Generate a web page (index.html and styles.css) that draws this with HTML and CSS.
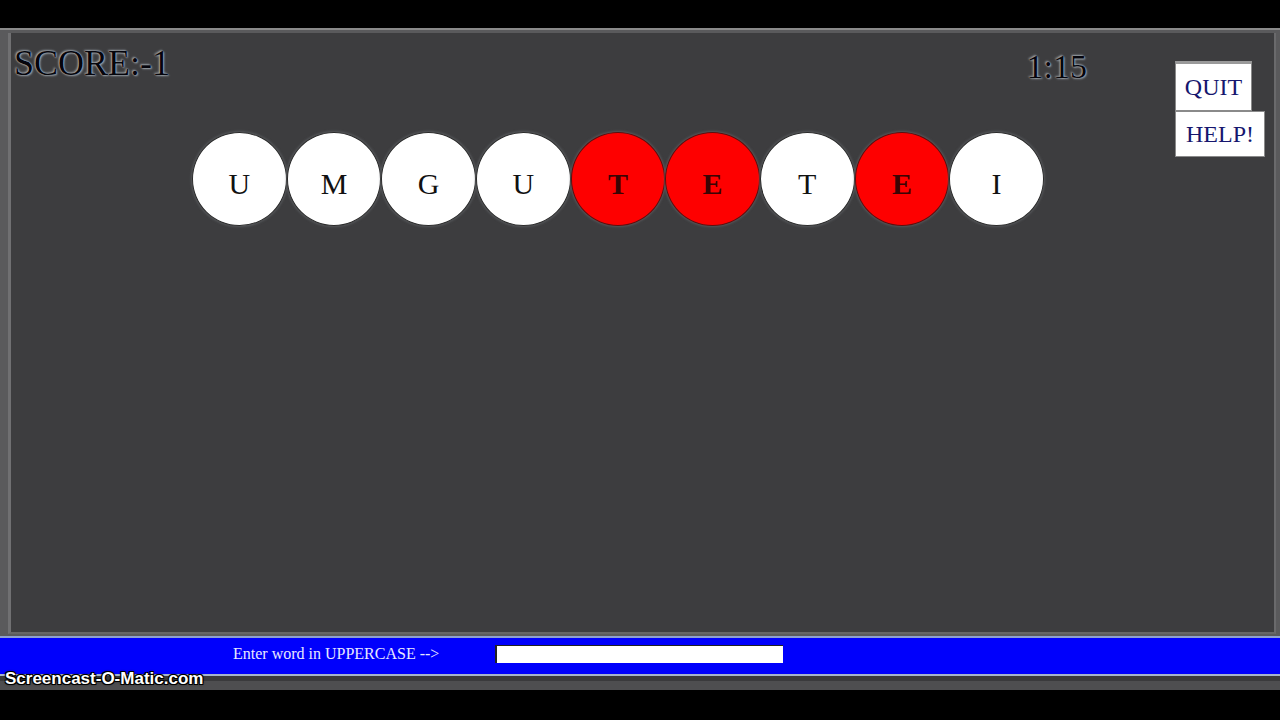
FILE: index.html
```html
<!DOCTYPE html>
<html>
<head>
<meta charset="utf-8">
<link rel="stylesheet" href="styles.css">
</head>
<body>
<div class="screen">
  <div class="frame">
    <div class="game">
      <div class="main">
        <div class="header">
          <div class="score">SCORE:-1</div>
          <div class="timer">1:15</div>
        </div>
        <div class="letters">
          <div class="ball">U</div>
          <div class="ball">M</div>
          <div class="ball">G</div>
          <div class="ball">U</div>
          <div class="ball red">T</div>
          <div class="ball red">E</div>
          <div class="ball">T</div>
          <div class="ball red">E</div>
          <div class="ball">I</div>
        </div>
      </div>
      <div class="buttons">
        <div class="btn quit">QUIT</div>
        <div class="btn help">HELP!</div>
      </div>
    </div>
  </div>
  <div class="bar">
    <span class="prompt">Enter word in UPPERCASE --&gt;</span>
    <div class="input"></div>
  </div>
  <div class="strip"></div>
  <div class="watermark">Screencast-O-Matic.com</div>
</div>
</body>
</html>
```

FILE: styles.css
```css
html, body {
  margin: 0;
  padding: 0;
  background: #000;
  width: 1280px;
  height: 720px;
  overflow: hidden;
}

.screen {
  position: relative;
  margin-top: 28px;
  height: 662px;
  background: #4a4a4c;
  display: flex;
  flex-direction: column;
}

.frame {
  flex: 1;
  display: flex;
  flex-direction: column;
  border-top: 2px solid #8a8a8a;
  padding-top: 3px;
  padding-left: 8px;
  padding-right: 4px;
  padding-bottom: 2px;
  background: #5a5a5c;
}

.game {
  flex: 1;
  display: flex;
  background: #3d3d3f;
  border-left: 3px solid #707072;
  border-right: 2px solid #6a6a6c;
  border-bottom: 2px solid #666;
}

.main {
  flex: 1;
  display: flex;
  flex-direction: column;
}

.header {
  display: flex;
  align-items: center;
  justify-content: space-between;
  padding: 9px 88px 0 3px;
  height: 42px;
}

.score {
  font-family: "Liberation Serif", "Times New Roman", serif;
  font-size: 36px;
  color: #05050c;
  text-shadow: 0 0 1px #c8d0d8, 1px 1px 2px #9aa2aa, -1px -1px 2px #9aa2aa;
  line-height: 1;
}

.timer {
  font-family: "Liberation Serif", "Times New Roman", serif;
  font-size: 34px;
  color: #05050c;
  text-shadow: 0 0 1px #c8d0d8, 1px 1px 2px #9aa2aa, -1px -1px 2px #9aa2aa;
  line-height: 1;
  margin-top: 8px;
}

.letters {
  display: flex;
  padding-left: 181px;
  margin-top: 48px;
}

.ball {
  flex: none;
  width: 94.67px;
  height: 94px;
  border-radius: 50%;
  background: #ffffff;
  border: 1px solid #2a2a2a;
  display: flex;
  align-items: center;
  justify-content: center;
  padding-top: 9px;
  box-sizing: border-box;
  box-shadow: 0 0 3px #707478;
  font-family: "Liberation Serif", "Times New Roman", serif;
  font-size: 30px;
  color: #111;
}

.ball.red {
  background: #fe0000;
  color: #3a0404;
  font-weight: bold;
  border-color: #5a1010;
}

.buttons {
  display: flex;
  flex-direction: column;
  align-items: flex-start;
  padding-top: 28px;
  margin-right: 9px;
}

.btn {
  background: #fff;
  font-family: "Liberation Serif", "Times New Roman", serif;
  font-size: 24px;
  color: #16166e;
  border: 1px solid #8a8a8a;
  display: flex;
  align-items: center;
  justify-content: center;
  box-sizing: border-box;
}

.quit {
  width: 77px;
  height: 50px;
  border-top: 3px solid #9a9a9a;
}

.help {
  width: 90px;
  height: 46px;
}

.bar {
  height: 38px;
  background: #0000fc;
  border-top: 2px solid #8ea0d0;
  display: flex;
  align-items: center;
  padding-left: 233px;
  padding-bottom: 4px;
  box-sizing: border-box;
}

.prompt {
  font-family: "Liberation Serif", "Times New Roman", serif;
  font-size: 16px;
  color: #e8e8ff;
  width: 262px;
}

.input {
  width: 288px;
  height: 18px;
  background: #fff;
  border-left: 2px solid #222;
  border-top: 1px solid #222;
  box-sizing: border-box;
}

.strip {
  height: 16px;
  background: #4e4e50;
  border-top: 2px solid #a6b4cc;
  box-sizing: border-box;
  box-shadow: inset 0 5px 0 #3a3a3c;
}

.watermark {
  position: absolute;
  left: 5px;
  top: 641px;
  font-family: "Liberation Sans", Arial, sans-serif;
  font-weight: bold;
  font-size: 17px;
  color: #fff;
  text-shadow: 1px 1px 0 #000, -1px -1px 0 #000, 1px -1px 0 #000, -1px 1px 0 #000, 0 0 3px #000;
  line-height: 20px;
}
```
